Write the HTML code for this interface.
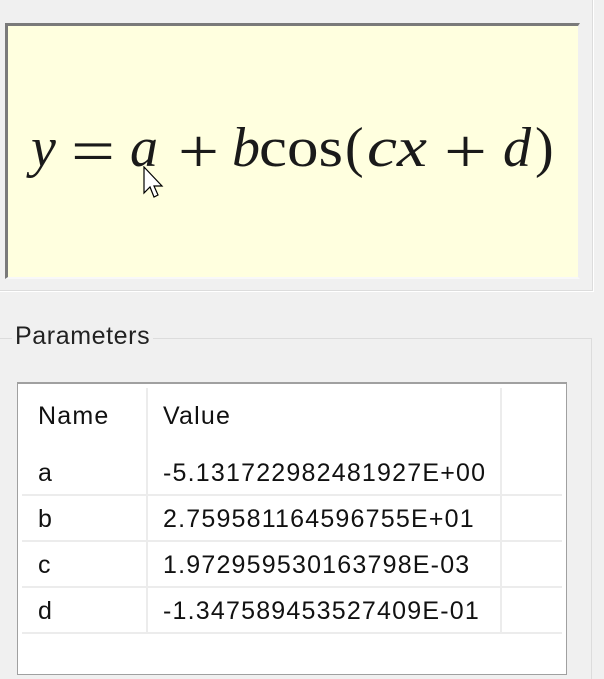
<!DOCTYPE html>
<html><head><style>
body{margin:0;width:604px;height:663px;background:#f0f0f0;position:relative;overflow:hidden;font-family:"Liberation Sans",sans-serif;}
.abs{position:absolute}
.t{position:absolute;font-size:25px;color:#111;letter-spacing:1.2px}
</style></head><body>
<div class="abs" style="left:-2px;top:-10px;width:593px;height:300px;border:1px solid #dcdcdc;border-top:none;box-shadow:1px 1px 0 #fff"></div>
<div class="abs" style="left:5px;top:23px;width:570px;height:251px;background:#ffffdf;border-top:3px solid #7a7a7a;border-left:3px solid #7a7a7a;border-right:2px solid #f0f0f0;border-bottom:2px solid #f8f8f8"></div>
<svg class="abs" style="left:0;top:0" width="604" height="280" font-family="Liberation Serif, serif" font-size="56" fill="#1a1a1a">
<text x="31" y="166" font-style="italic">y</text>
<text x="71" y="172" font-size="62" textLength="44" lengthAdjust="spacingAndGlyphs">=</text>
<text x="130" y="166" font-style="italic">a</text>
<text x="178" y="172" font-size="62" textLength="41" lengthAdjust="spacingAndGlyphs">+</text>
<text x="232" y="166" font-style="italic">b</text>
<text x="259" y="166" textLength="84" lengthAdjust="spacingAndGlyphs">cos</text>
<text x="345" y="166">(</text>
<text x="367" y="166" font-style="italic" textLength="60" lengthAdjust="spacingAndGlyphs">cx</text>
<text x="444" y="172" font-size="62" textLength="43" lengthAdjust="spacingAndGlyphs">+</text>
<text x="503" y="166" font-style="italic">d</text>
<text x="535" y="166">)</text>
</svg>
<svg class="abs" style="left:143px;top:166px" width="26" height="38" viewBox="0 0 26 38"><path d="M1 1 L1 27 L7 21 L11 31 L15 29 L11 20 L19 20 Z" fill="#fff" stroke="#000" stroke-width="1.2"/></svg>
<div class="abs" style="left:0;top:338px;width:591px;height:340px;border-top:1px solid #dcdcdc;border-right:1px solid #dcdcdc"></div>
<div class="abs" style="left:12px;top:322px;padding:0 3px;background:#f0f0f0;font-size:25px;letter-spacing:0.6px;color:#222">Parameters</div>
<div class="abs" style="left:17px;top:382px;width:548px;height:290px;background:#fff;border:1px solid #a0a0a0;border-top:2px solid #a0a0a0"></div>
<div class="abs" style="left:146px;top:388px;width:2px;height:246px;background:#ececec"></div>
<div class="abs" style="left:500px;top:388px;width:2px;height:246px;background:#ececec"></div>
<div class="abs" style="left:22px;top:494px;width:540px;height:2px;background:#ececec"></div>
<div class="abs" style="left:22px;top:540px;width:540px;height:2px;background:#ececec"></div>
<div class="abs" style="left:22px;top:586px;width:540px;height:2px;background:#ececec"></div>
<div class="abs" style="left:22px;top:632px;width:540px;height:2px;background:#ececec"></div>
<div class="t" style="left:38px;top:402px">Name</div>
<div class="t" style="left:163px;top:402px">Value</div>
<div class="t" style="left:38px;top:459px">a</div>
<div class="t" style="left:163px;top:459px">-5.131722982481927E+00</div>
<div class="t" style="left:38px;top:505px">b</div>
<div class="t" style="left:163px;top:505px">2.759581164596755E+01</div>
<div class="t" style="left:38px;top:551px">c</div>
<div class="t" style="left:163px;top:551px">1.972959530163798E-03</div>
<div class="t" style="left:38px;top:597px">d</div>
<div class="t" style="left:163px;top:597px">-1.347589453527409E-01</div>
</body></html>
